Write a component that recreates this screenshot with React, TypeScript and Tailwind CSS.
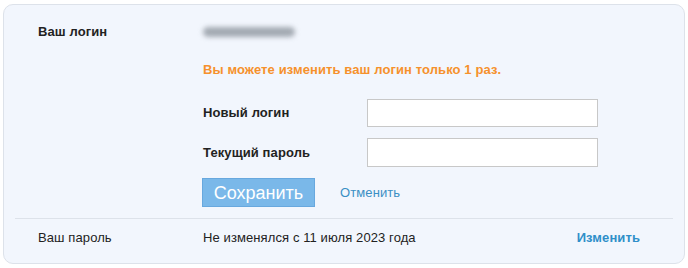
import React from "react";

export default function App() {
  return (
    <div className="w-[688px] h-[268px] bg-white px-[3px] py-[4px] font-['Liberation_Sans',Arial,sans-serif] text-[13px] tracking-[0.1px] text-[#222]">
      <div className="h-[260px] rounded-[10px] border border-[#dde2ea] bg-[#f2f6fd] flex flex-col">
        {/* Логин */}
        <div className="flex pl-[34px] pt-[19px] leading-[16px]">
          <div className="w-[165px] font-bold">Ваш логин</div>
          <div className="w-[92px] h-[10px] mt-[3px] rounded-full bg-[#a3aab2] blur-[2.5px]" />
        </div>

        <div className="pl-[199px] mt-[22px] leading-[16px] font-bold text-[#f6912c]">
          Вы можете изменить ваш логин только 1 раз.
        </div>

        <div className="flex items-center pl-[199px] mt-[21px] h-[28px]">
          <div className="w-[164px] font-bold">Новый логин</div>
          <input className="w-[231px] h-[28px] bg-white border border-[#c8c8c8] outline-none" />
        </div>

        <div className="flex items-center pl-[199px] mt-[11px] h-[29px]">
          <div className="w-[164px] font-bold">Текущий пароль</div>
          <input type="password" className="w-[231px] h-[29px] bg-white border border-[#c8c8c8] outline-none" />
        </div>

        <div className="flex items-center pl-[198px] mt-[11px]">
          <button className="w-[113px] h-[29px] bg-[#7ab8e9] border border-[#68a8de] text-white text-[18px] leading-[20px] tracking-normal">
            Сохранить
          </button>
          <a className="ml-[25px] text-[#3a8fc4]">Отменить</a>
        </div>

        <div className="mx-[11px] mt-[11px] border-t border-[#dde2ea]" />

        {/* Пароль */}
        <div className="flex items-center pl-[34px] pr-[44px] mt-[11px] leading-[16px]">
          <div className="w-[165px]">Ваш пароль</div>
          <div className="flex-1">Не изменялся с 11 июля 2023 года</div>
          <a className="font-bold text-[#2f8fc9]">Изменить</a>
        </div>
      </div>
    </div>
  );
}
